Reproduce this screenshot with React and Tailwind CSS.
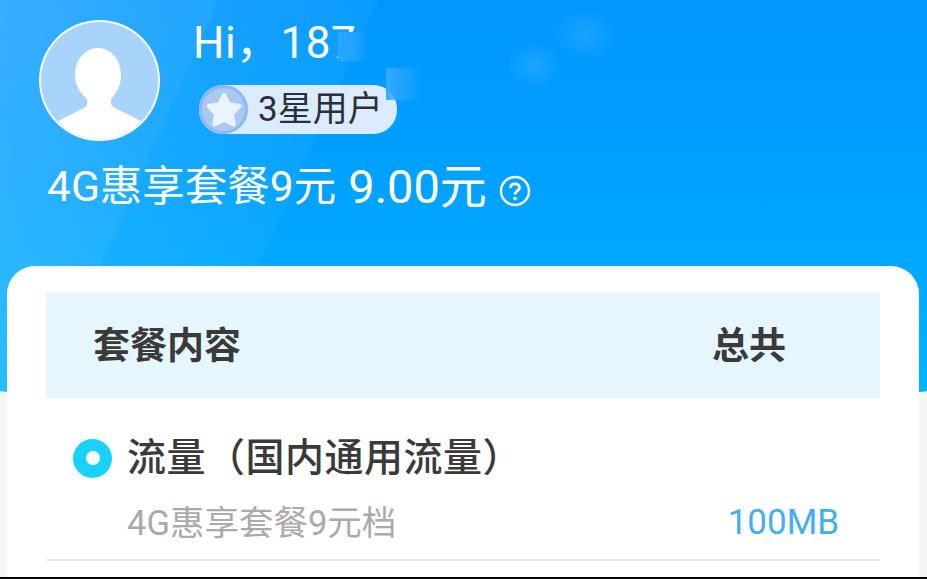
import React from 'react';

const Avatar = () => (
  <div className="w-[121px] h-[121px] rounded-full border-2 border-white/90 bg-[#a8d4fb] overflow-hidden shrink-0">
    <svg viewBox="0 0 117 117" className="w-full h-full">
      <path d="M57 26 C70 26 80 38 80 53 C80 64 75 72 70 77 C69 82 71 85 76 87 L100 99 C88 113 72 117 57 117 C42 117 28 112 17 99 L41 87 C46 85 47 82 46 77 C40 72 34 64 34 53 C34 38 44 26 57 26 Z" fill="#fff" />
    </svg>
  </div>
);

const StarBadge = () => (
  <div className="flex items-center h-[49px] w-[198px] rounded-[24px] bg-[#dcebfd]">
    <div className="w-[49px] h-[49px] rounded-full bg-[#a9c9f3] border-[3px] border-[#8fb8ee] flex items-center justify-center shrink-0">
      <svg viewBox="0 0 24 24" className="w-[42px] h-[42px]">
        <path d="M12 3.5 L14.8 8.8 L20.8 9.8 L16.5 14.2 L17.5 20.2 L12 17.5 L6.5 20.2 L7.5 14.2 L3.2 9.8 L9.2 8.8 Z" fill="#eaf3fe" stroke="#eaf3fe" strokeWidth="2.4" strokeLinejoin="round" />
      </svg>
    </div>
    <span className="ml-[10px] text-[35px] leading-none text-[#2b2f38]">3星用户</span>
  </div>
);

const HelpIcon = () => (
  <svg viewBox="0 0 32 32" className="w-[32px] h-[32px] ml-[12px] mt-[8px]" fill="none" stroke="#fff">
    <circle cx="16" cy="16" r="14" strokeWidth="2.4" />
    <path d="M11.5 13 C11.5 10 13.5 8.8 16 8.8 C18.6 8.8 20.5 10.4 20.5 12.7 C20.5 15.6 16 16 16 19.5" strokeWidth="2.8" />
    <circle cx="16" cy="23.6" r="1.8" fill="#fff" stroke="none" />
  </svg>
);

const App = () => {
  return (
    <div className="relative flex flex-col w-[927px] h-[579px] overflow-hidden bg-[#f5f5f5] font-['Roboto','Noto_Sans_CJK_SC',sans-serif]">
      <div className="h-[397px] shrink-0 rounded-b-[50%_6px] bg-[linear-gradient(114deg,rgba(255,255,255,0.22)_0px,rgba(255,255,255,0.13)_200px,rgba(255,255,255,0.09)_200px,rgba(255,255,255,0.04)_345px,rgba(255,255,255,0)_345px),linear-gradient(180deg,#0097ff_0%,#00a2ff_50%,#00b4ff_100%)]">
        <div className="flex pl-[39px] pt-[20px]">
          <Avatar />
          <div className="ml-[33px] flex flex-col">
            <div className="text-[44px] leading-[46px] tracking-[0.5px] text-white">Hi，187</div>
            <div className="ml-[6px] mt-[19px]"><StarBadge /></div>
          </div>
        </div>
        <div className="flex items-center pl-[47px] mt-[18px] text-white">
          <span className="text-[42.5px] leading-[56px]">4G惠享套餐9元</span>
          <span className="ml-[12px] text-[47px] leading-[56px]">9.00元</span>
          <HelpIcon />
        </div>
      </div>

      {/* mosaic smudges over the phone number */}
      <div className="absolute left-[338px] top-[32px] w-[30px] h-[29px] bg-[linear-gradient(90deg,#2ba7ff_0%,#1ea3ff_55%,rgba(20,160,255,0)_100%)]" />
      <div className="absolute left-[386px] top-[68px] w-[36px] h-[32px] bg-[linear-gradient(90deg,#37a9ff_0%,rgba(50,170,255,0)_100%)]" />
      <div className="absolute left-[507px] top-[42px] w-[54px] h-[46px] bg-[radial-gradient(closest-side,rgba(80,180,255,0.4),rgba(80,180,255,0))]" />
      <div className="absolute left-[550px] top-[8px] w-[70px] h-[52px] bg-[radial-gradient(closest-side,rgba(80,180,255,0.35),rgba(80,180,255,0))]" />

      <div className="relative -mt-[131px] mx-[7px] w-[912px] flex-1 rounded-t-[28px] bg-white px-[39px] pt-[27px]">
        <div className="flex items-center justify-between h-[105px] bg-[#e6f6ff] pl-[47px] pr-[94px] pt-[3px] text-[37px] font-bold text-[#3a3a3a]">
          <span>套餐内容</span>
          <span>总共</span>
        </div>
        <div className="h-[163px] border-b-2 border-[#e8e8e8] pl-[27px] pr-[41px] pt-[35px]">
          <div className="flex items-center">
            <div className="flex items-center justify-center w-[39px] h-[39px] rounded-full bg-[#1ad0ff]">
              <div className="w-[14px] h-[14px] rounded-full bg-white" />
            </div>
            <span className="ml-[15px] text-[39px] leading-[50px] tracking-[0.5px] font-medium text-[#3a3a3a]">流量（国内通用流量）</span>
          </div>
          <div className="flex items-center justify-between pl-[54px] mt-[16px] leading-[48px]">
            <span className="text-[34.5px] text-[#aaaaaa]">4G惠享套餐9元档</span>
            <span className="text-[35px] text-[#42aef5]">100MB</span>
          </div>
        </div>
      </div>
      <div className="h-[2px] shrink-0 bg-black" />
    </div>
  );
};

export default App;
